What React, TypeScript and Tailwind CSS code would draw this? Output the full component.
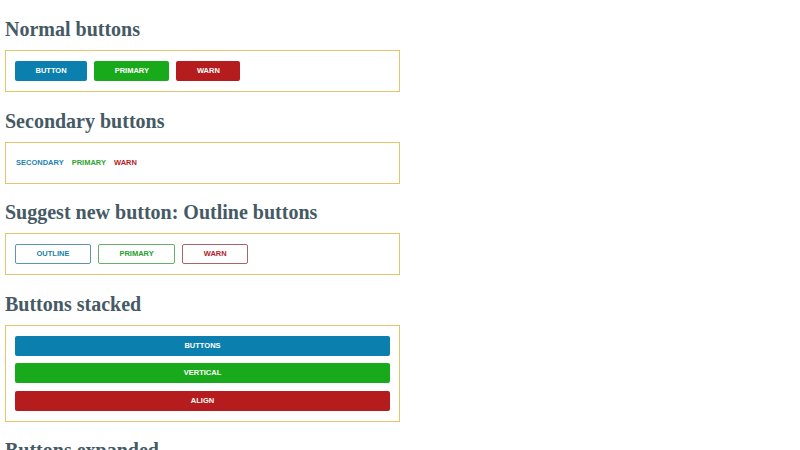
import React from "react";

const serif = { fontFamily: '"Liberation Serif", "Times New Roman", serif' };

const solid = [
  { label: "Button", cls: "bg-[#0b7fad]" },
  { label: "Primary", cls: "bg-[#19aa1c]" },
  { label: "Warn", cls: "bg-[#b51c1d]" },
];

const secondary = [
  { label: "Secondary", cls: "text-[#1b84b0]" },
  { label: "Primary", cls: "text-[#2ea42f]" },
  { label: "Warn", cls: "text-[#b32228]" },
];

const outline = [
  { label: "Outline", cls: "border-[#5d95ad] text-[#1b7fa8]" },
  { label: "Primary", cls: "border-[#6aae6b] text-[#26a12a]" },
  { label: "Warn", cls: "border-[#a8636d] text-[#b3232a]" },
];

const stacked = [
  { label: "Buttons", cls: "bg-[#0b7fad]" },
  { label: "Vertical", cls: "bg-[#19aa1c]" },
  { label: "Align", cls: "bg-[#b51c1d]" },
];

const btnBase =
  "h-5 rounded-[2px] text-[7.5px] font-bold uppercase leading-none flex items-center justify-center";

function Heading({ children, first }: { children: React.ReactNode; first?: boolean }) {
  return (
    <h2
      style={serif}
      className={`text-[20px] leading-[23px] font-bold text-[#455a64] mb-[9px] ${first ? "" : "mt-[17.5px]"}`}
    >
      {children}
    </h2>
  );
}

function Box({ children }: { children: React.ReactNode }) {
  return <div className="w-[395px] border border-[#e6c46c] px-[9px] py-[10px]">{children}</div>;
}

export default function App() {
  return (
    <div
      className="min-h-[450px] bg-white px-[5px] pt-[18px] overflow-hidden"
      style={{ fontFamily: '"Liberation Sans", Arial, sans-serif' }}
    >
      <Heading first>Normal buttons</Heading>
      <Box>
        <div className="flex gap-[7px]">
          {solid.map((b) => (
            <button key={b.label} className={`${btnBase} px-[20.5px] text-white ${b.cls}`}>
              {b.label}
            </button>
          ))}
        </div>
      </Box>

      <Heading>Secondary buttons</Heading>
      <Box>
        <div className="flex gap-[8px] pl-px">
          {secondary.map((b) => (
            <button key={b.label} className={`${btnBase} ${b.cls}`}>
              {b.label}
            </button>
          ))}
        </div>
      </Box>

      <Heading>Suggest new button: Outline buttons</Heading>
      <Box>
        <div className="flex gap-[7px]">
          {outline.map((b) => (
            <button key={b.label} className={`${btnBase} border px-[20.5px] ${b.cls}`}>
              {b.label}
            </button>
          ))}
        </div>
      </Box>

      <Heading>Buttons stacked</Heading>
      <Box>
        <div className="flex flex-col gap-[7.5px]">
          {stacked.map((b) => (
            <button key={b.label} className={`${btnBase} w-full text-white ${b.cls}`}>
              {b.label}
            </button>
          ))}
        </div>
      </Box>

      <Heading>Buttons expanded</Heading>
    </div>
  );
}
